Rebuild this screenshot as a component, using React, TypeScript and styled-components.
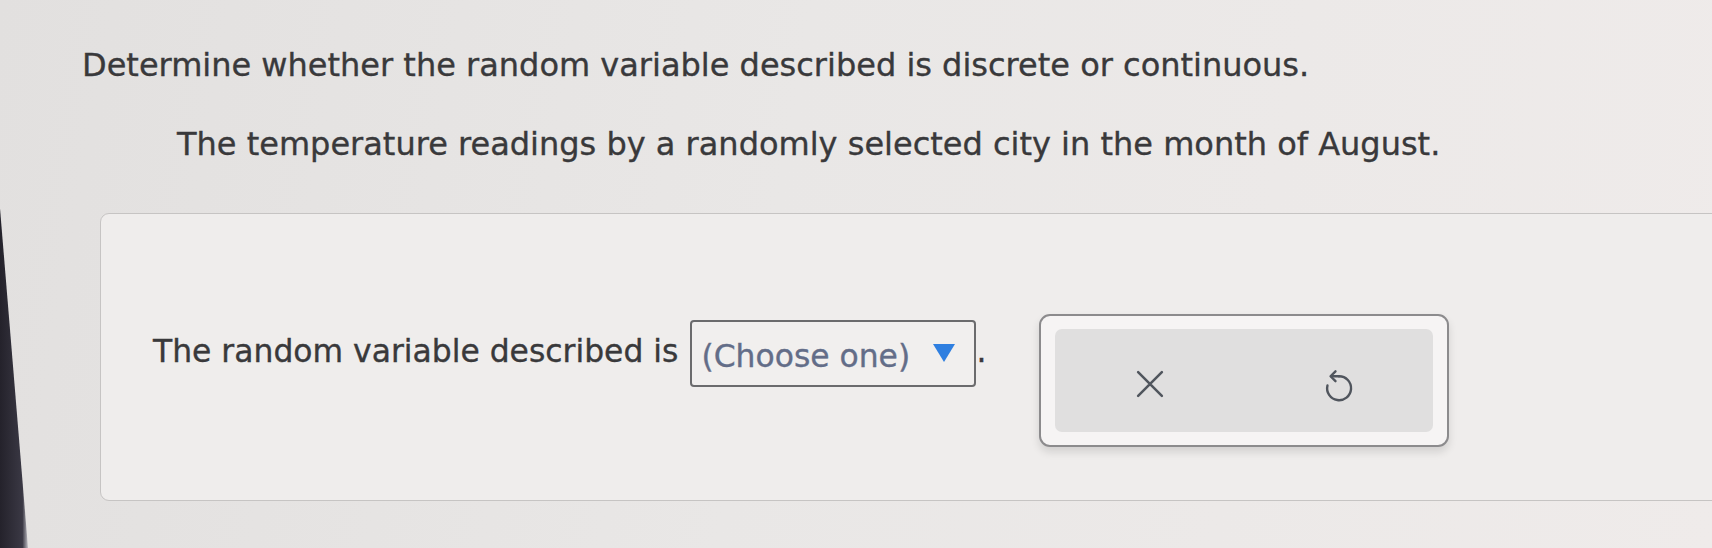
import React from "react";
import styled, { createGlobalStyle } from "styled-components";

const GlobalStyle = createGlobalStyle`
  html, body {
    margin: 0;
    padding: 0;
    overflow: hidden;
  }
  body {
    font-family: "DejaVu Sans", Verdana, sans-serif;
    color: #39393b;
    -webkit-text-stroke: 0.35px currentColor;
  }
`;

const Screen = styled.div`
  display: flex;
  width: 1712px;
  height: 548px;
  background: linear-gradient(100deg, #e2e0df 0%, #e9e7e6 45%, #efebea 100%);
  overflow: hidden;
`;

const Bezel = styled.div`
  position: relative;
  flex: 0 0 28px;
  &::before {
    content: "";
    position: absolute;
    inset: 0;
    background: linear-gradient(90deg, #24222b 0%, #3a3844 80%, #bdbcc2 100%);
    clip-path: polygon(0 38%, 100% 100%, 0 100%);
  }
`;

const Content = styled.div`
  flex: 1;
  display: flex;
  flex-direction: column;
  padding: 46px 0 0 54px;
`;

const Prompt = styled.p`
  margin: 0;
  font-size: 32px;
  line-height: 38px;
`;

const Statement = styled(Prompt)`
  margin-top: 41px;
  padding-left: 95px;
`;

const AnswerBox = styled.div`
  margin: 50px -60px 0 18px;
  height: 288px;
  box-sizing: border-box;
  border: 1.5px solid #c6c4c3;
  border-radius: 9px;
  background: #efedec;
  padding: 100px 0 0 52px;
`;

const AnswerRow = styled.div`
  display: flex;
  align-items: flex-start;
`;

const Sentence = styled.div`
  display: flex;
  align-items: center;
  margin-top: 6px;
  height: 67px;
  font-size: 31.4px;
  white-space: pre;
`;

const Lead = styled.span`
  margin-bottom: 6px;
`;

const Select = styled.div`
  display: flex;
  align-items: center;
  box-sizing: border-box;
  height: 67px;
  width: 286px;
  margin-left: 12px;
  padding: 4px 19px 0 9px;
  border: 2px solid #6b6b6d;
  border-radius: 4px;
  background: #f1efee;
  color: #636d88;
`;

const Arrow = styled.span`
  margin-left: auto;
  width: 0;
  height: 0;
  border-left: 11px solid transparent;
  border-right: 11px solid transparent;
  border-top: 18px solid #2f7fe0;
  margin-top: -6px;
`;

const Period = styled(Lead)`
  margin-left: 0;
`;

const ActionGroup = styled.div`
  margin-left: 53px;
  width: 410px;
  height: 133px;
  box-sizing: border-box;
  padding: 13px 14px;
  border: 2px solid #8c8b8d;
  border-radius: 11px;
  background: #f6f4f4;
  box-shadow: 0 5px 9px rgba(0, 0, 0, 0.12);
`;

const ActionPanel = styled.div`
  display: grid;
  grid-template-columns: 1fr 1fr;
  height: 100%;
  border-radius: 7px;
  background: #e0dfdf;
`;

const ActionButton = styled.div`
  display: flex;
  align-items: center;
  justify-content: center;
  padding-top: 6px;
  color: #50555d;
`;

function ClearIcon() {
  return (
    <svg width="38" height="38" viewBox="0 0 24 24" fill="none" stroke="currentColor" strokeWidth="1.6" strokeLinecap="round">
      <path d="M4.5 4.5 L19.5 19.5 M19.5 4.5 L4.5 19.5" />
    </svg>
  );
}

function UndoIcon() {
  return (
    <svg width="34" height="38" viewBox="0 0 24 27" fill="none" stroke="currentColor" strokeWidth="1.7" strokeLinecap="round" strokeLinejoin="round">
      <path d="M12 8 A8.5 8.5 0 1 1 3.8 14.5" />
      <path d="M12 8 H6.5" />
      <path d="M9.5 4.5 L6 8 L9.5 11.5" />
    </svg>
  );
}

export default function App() {
  return (
    <>
      <GlobalStyle />
      <Screen>
        <Bezel />
        <Content>
          <Prompt>Determine whether the random variable described is discrete or continuous.</Prompt>
          <Statement>The temperature readings by a randomly selected city in the month of August.</Statement>
          <AnswerBox>
            <AnswerRow>
              <Sentence>
                <Lead>The random variable described is</Lead>
                <Select>
                  (Choose one)
                  <Arrow />
                </Select>
                <Period>.</Period>
              </Sentence>
              <ActionGroup>
                <ActionPanel>
                  <ActionButton>
                    <ClearIcon />
                  </ActionButton>
                  <ActionButton>
                    <UndoIcon />
                  </ActionButton>
                </ActionPanel>
              </ActionGroup>
            </AnswerRow>
          </AnswerBox>
        </Content>
      </Screen>
    </>
  );
}
